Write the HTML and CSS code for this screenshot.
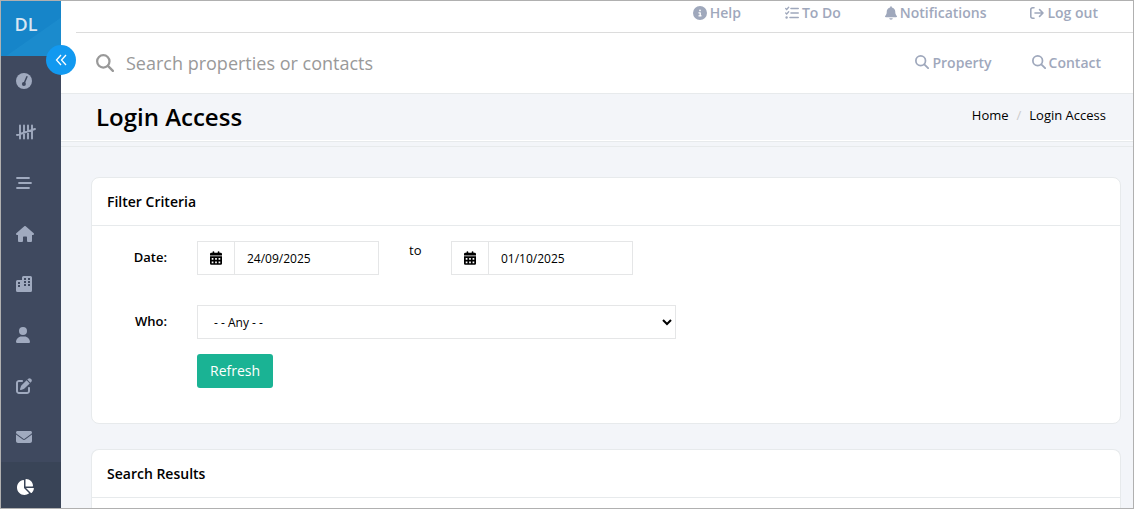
FILE: index.html
```html
<!DOCTYPE html>
<html lang="en">
<head>
    <meta charset="UTF-8">
    <meta name="viewport" content="width=device-width, initial-scale=1.0">
    <title>Login Access</title>
    <link rel="stylesheet" href="styles.css">
</head>
<body>
    <svg class="sprite" aria-hidden="true">
        <symbol id="search" viewBox="0 0 16 16">
            <circle cx="6.5" cy="6.5" r="5.5" fill="none" stroke="currentColor" stroke-width="2"/>
            <path d="M10.6 10.6L15 15" stroke="currentColor" stroke-width="2.1" stroke-linecap="round"/>
        </symbol>
        <symbol id="calendar" viewBox="0 0 14 16">
            <path fill="currentColor" fill-rule="evenodd" d="M3 1a1 1 0 0 1 2 0v1h4V1a1 1 0 0 1 2 0v1h1.500a1.500 1.500 0 0 1 1.500 1.500V5H0V3.500A1.500 1.500 0 0 1 1.500 2H3zM0 6h14v8.500a1.500 1.500 0 0 1-1.500 1.500h-11A1.500 1.500 0 0 1 0 14.500zM2 8v2h2V8zm4 0v2h2V8zm4 0v2h2V8zM2 12v2h2v-2zm4 0v2h2v-2zm4 0v2h2v-2z"/>
        </symbol>
    </svg>

    <aside class="sidebar">
        <div class="logo">DL</div>
        <button class="toggle" type="button" aria-label="Collapse menu">
            <svg width="12" height="12" viewBox="0 0 12 12" fill="none" stroke="currentColor" stroke-width="1.300"><path d="M6 1L1.500 6L6 11M11 1L6.500 6L11 11"/></svg>
        </button>
        <nav class="menu">
            <a href="#" aria-label="Dashboard">
                <svg width="16" height="16" viewBox="0 0 16 16"><circle cx="8" cy="8" r="8" fill="currentColor"/><path d="M10.900 3.800L8.300 10" stroke="#3f495f" stroke-width="1.500" stroke-linecap="round"/><circle cx="7.900" cy="11" r="2" fill="#3f495f"/></svg>
            </a>
            <a href="#" aria-label="Tally">
                <svg width="20" height="16" viewBox="0 0 20 16" fill="none" stroke="currentColor" stroke-width="1.900" stroke-linecap="round"><path d="M4 1.500V14.500M8 1.500V14.500M12 1.500V14.500M16 1.500V14.500M1 11L19 5"/></svg>
            </a>
            <a href="#" aria-label="Lists">
                <svg width="16" height="14" viewBox="0 0 16 14" fill="none" stroke="currentColor" stroke-width="1.800" stroke-linecap="round"><path d="M1 2H13M3 7H15M1 12H13"/></svg>
            </a>
            <a href="#" aria-label="Home">
                <svg width="18" height="16" viewBox="0 0 18 16" fill="currentColor"><path d="M8.300.300a1 1 0 0 1 1.400 0l8 7c.700.700.200 1.700-.700 1.700h-1v5.700c0 .800-.500 1.300-1.300 1.300H12.300c-.800 0-1.300-.500-1.300-1.300V11.500c0-.600-.400-1-1-1H8c-.600 0-1 .400-1 1v3.200C7 15.500 6.500 16 5.700 16H3.300C2.500 16 2 15.500 2 14.700V9H1C.100 9-.400 8 .300 7.300z"/></svg>
            </a>
            <a href="#" aria-label="Buildings">
                <svg width="16" height="16" viewBox="0 0 16 16" fill="currentColor" fill-rule="evenodd"><path d="M6 1.500A1.500 1.500 0 0 1 7.500 0h7A1.500 1.500 0 0 1 16 1.500v13a1.500 1.500 0 0 1-1.500 1.500h-13A1.500 1.500 0 0 1 0 14.500v-9A1.500 1.500 0 0 1 1.500 4H6zM8 2v2h2V2zm4 0v2h2V2zM8 5v2h2V5zm4 0v2h2V5zM8 8v2h2V8zm4 0v2h2V8zM2 6v2h2V6zm0 3v2h2V9z"/></svg>
            </a>
            <a href="#" aria-label="Contacts">
                <svg width="14" height="16" viewBox="0 0 448 512" fill="currentColor"><path d="M224 256A128 128 0 1 0 224 0a128 128 0 1 0 0 256zm-45.700 48C79.800 304 0 383.800 0 482.300C0 498.700 13.300 512 29.700 512H418.300c16.400 0 29.700-13.300 29.700-29.700C448 383.800 368.200 304 269.700 304H178.300z"/></svg>
            </a>
            <a href="#" aria-label="Edit">
                <svg width="16" height="16" viewBox="0 0 512 512" fill="currentColor"><path d="M471.600 21.700c-21.900-21.900-57.300-21.900-79.200 0L362.300 51.700l97.900 97.900 30.100-30.100c21.900-21.900 21.900-57.300 0-79.200L471.600 21.700zm-299.200 220c-6.100 6.100-10.800 13.600-13.500 21.900l-29.600 88.800c-2.900 8.600-.600 18.100 5.800 24.600s15.900 8.700 24.600 5.800l88.800-29.600c8.200-2.700 15.700-7.400 21.900-13.500L437.700 172.300 339.700 74.300 172.400 241.700zM96 64C43 64 0 107 0 160V416c0 53 43 96 96 96H352c53 0 96-43 96-96V320c0-17.700-14.300-32-32-32s-32 14.300-32 32v96c0 17.700-14.300 32-32 32H96c-17.700 0-32-14.300-32-32V160c0-17.700 14.300-32 32-32h96c17.700 0 32-14.300 32-32s-14.300-32-32-32H96z"/></svg>
            </a>
            <a href="#" aria-label="Mail">
                <svg width="16" height="16" viewBox="0 0 512 512" fill="currentColor"><path d="M48 64C21.500 64 0 85.500 0 112c0 15.100 7.100 29.300 19.200 38.400L236.800 313.600c11.400 8.500 27 8.500 38.400 0L492.800 150.400c12.100-9.100 19.200-23.300 19.200-38.400c0-26.500-21.500-48-48-48H48zM0 176V384c0 35.300 28.700 64 64 64H448c35.300 0 64-28.700 64-64V176L294.400 339.200c-22.800 17.100-54 17.100-76.800 0L0 176z"/></svg>
            </a>
            <a href="#" class="active" aria-label="Reports">
                <svg width="18" height="16" viewBox="0 0 576 512" fill="currentColor"><path d="M304 240V16.600c0-9 7-16.600 16-16.600C443.700 0 544 100.300 544 224c0 9-7.600 16-16.600 16H304zM32 272C32 150.700 122.100 50.300 239 34.300c9.200-1.300 17 6.100 17 15.400V288L412.500 444.500c6.700 6.700 6.200 17.700-1.500 23.100C371.800 495.600 323.800 512 272 512C139.500 512 32 404.600 32 272zm526.400 16c9.300 0 16.600 7.800 15.400 17c-7.700 55.900-34.600 105.600-73.900 142.300c-6 5.600-15.400 5.200-21.200-.700L320 288H558.400z"/></svg>
            </a>
        </nav>
    </aside>

    <main class="page">
        <nav class="top-links">
            <a href="#"><svg width="14" height="14" viewBox="0 0 512 512" fill="currentColor"><path d="M256 512A256 256 0 1 0 256 0a256 256 0 1 0 0 512zM216 336h24V272H216c-13.300 0-24-10.700-24-24s10.700-24 24-24h48c13.300 0 24 10.700 24 24v88h8c13.300 0 24 10.700 24 24s-10.700 24-24 24H216c-13.300 0-24-10.700-24-24s10.700-24 24-24zm40-208a32 32 0 1 1 0 64 32 32 0 1 1 0-64z"/></svg>Help</a>
            <a href="#"><svg width="14" height="14" viewBox="0 0 14 14" fill="none" stroke="currentColor" stroke-width="1.600" stroke-linecap="round"><path d="M6 2.500H13.200M6 7H13.200M5 11.500H13.200"/><path stroke-width="1.300" d="M.700 2.500L1.700 3.500L3.700 1.200M.700 7L1.700 8L3.700 5.700"/><circle cx="1.600" cy="11.500" r="1.200" fill="currentColor" stroke="none"/></svg>To Do</a>
            <a href="#"><svg width="12" height="14" viewBox="0 0 448 512" fill="currentColor"><path d="M224 0c-17.700 0-32 14.300-32 32V51.200C119 66 64 130.600 64 208v18.800c0 47-17.300 92.400-48.500 127.600l-7.400 8.300c-8.400 9.400-10.400 22.900-5.300 34.400S19.400 416 32 416H416c12.600 0 24-7.400 29.200-18.900s3.100-25-5.300-34.400l-7.400-8.300C401.300 319.200 384 273.900 384 226.800V208c0-77.400-55-142-128-156.800V32c0-17.700-14.300-32-32-32zm45.300 493.300c12-12 18.700-28.300 18.700-45.300H160c0 17 6.700 33.300 18.700 45.300s28.300 18.700 45.300 18.700s33.300-6.700 45.300-18.700z"/></svg>Notifications</a>
            <a href="#"><svg width="14" height="14" viewBox="0 0 14 14" fill="none" stroke="currentColor" stroke-width="1.600" stroke-linecap="round" stroke-linejoin="round"><path d="M4 1.800H2.600A1.800 1.800 0 0 0 .800 3.600V10.400A1.800 1.800 0 0 0 2.600 12.200H4M5 7H13M9.600 3.600L13 7L9.600 10.400"/></svg>Log out</a>
        </nav>

        <div class="search-bar">
            <label class="search">
                <svg width="18" height="18"><use href="#search"/></svg>
                <input type="text" placeholder="Search properties or contacts" aria-label="Search properties or contacts">
            </label>
            <div class="search-links">
                <a href="#"><svg width="14" height="14"><use href="#search"/></svg>Property</a>
                <a href="#"><svg width="14" height="14"><use href="#search"/></svg>Contact</a>
            </div>
        </div>

        <header class="heading">
            <h1>Login Access</h1>
            <ol class="breadcrumb">
                <li><a href="#">Home</a></li>
                <li>Login Access</li>
            </ol>
        </header>

        <div class="content">
            <section class="card">
                <h2>Filter Criteria</h2>
                <form class="filter">
                    <label for="dateFrom">Date:</label>
                    <div class="dates">
                        <div class="date-box">
                            <span class="addon"><svg width="12" height="14"><use href="#calendar"/></svg></span>
                            <input type="text" id="dateFrom" value="24/09/2025">
                        </div>
                        <label class="to" for="dateTo">to</label>
                        <div class="date-box">
                            <span class="addon"><svg width="12" height="14"><use href="#calendar"/></svg></span>
                            <input type="text" id="dateTo" value="01/10/2025">
                        </div>
                    </div>
                    <label for="who">Who:</label>
                    <div class="who">
                        <select id="who">
                            <option>- - Any - -</option>
                        </select>
                        <button class="refresh" type="submit">Refresh</button>
                    </div>
                </form>
            </section>

            <section class="card results">
                <h2>Search Results</h2>
            </section>
        </div>
    </main>
</body>
</html>
```
FILE: styles.css
```css
* {
    box-sizing: border-box;
}
body {
    margin: 0;
    height: 100vh;
    display: flex;
    overflow: hidden;
    border: 1px solid #b0b0b0;
    background-color: #f3f5f9;
    font-family: "Open Sans", sans-serif;
    font-size: 13px;
    color: #000;
}
a {
    color: inherit;
    text-decoration: none;
}
input, select, button {
    font-family: inherit;
    color: inherit;
}
.sprite {
    position: absolute;
    width: 0;
    height: 0;
}

/* sidebar */
.sidebar {
    position: relative;
    flex: none;
    display: flex;
    flex-direction: column;
    width: 60px;
    background-color: #3f495f;
}
.logo {
    flex: none;
    height: 55px;
    padding-right: 10px;
    background: linear-gradient(145deg, #1685c9 60%, #1b8bcd 61%);
    color: #d9e6f2;
    font-size: 18px;
    font-weight: 600;
    line-height: 47px;
    text-align: center;
}
.toggle {
    position: absolute;
    top: 44px;
    left: 45px;
    width: 30px;
    height: 30px;
    display: flex;
    align-items: center;
    justify-content: center;
    padding: 0;
    border: none;
    border-radius: 50%;
    background-color: #1299f0;
    color: #fff;
    cursor: pointer;
}
.menu {
    display: flex;
    flex: 1;
    flex-direction: column;
    min-height: 0;
}
.menu a {
    display: flex;
    flex: 51 1 0;
    align-items: center;
    padding-left: 15px;
    color: #a0aabf;
}
.menu a.active {
    flex-grow: 42;
    padding-top: 4px;
    background-color: #394457;
    color: #fff;
}

/* top bars */
.page {
    flex: 1;
    min-width: 0;
    display: flex;
    flex-direction: column;
}
.top-links, .search-links {
    display: flex;
    gap: 44px;
    color: #9fa8bc;
    font-size: 14px;
    font-weight: 600;
}
.top-links a, .search-links a {
    display: flex;
    align-items: center;
    gap: 3px;
}
.top-links {
    flex: none;
    justify-content: flex-end;
    height: 32px;
    margin-left: 15px;
    padding: 0 35px 8px 0;
    border-bottom: 1px solid #dcdcdc;
    background-color: #fff;
    box-shadow: -15px 0 #fff;
}
.search-bar {
    flex: none;
    display: flex;
    align-items: center;
    justify-content: space-between;
    height: 61px;
    padding: 0 32px 0 35px;
    border-bottom: 1px solid #e7eaec;
    background-color: #fff;
}
.search-links {
    gap: 40px;
    padding-bottom: 2px;
}
.search {
    display: flex;
    flex: 1;
    align-items: center;
    gap: 12px;
    color: #999;
}
.search input {
    flex: 1;
    padding: 0;
    border: none;
    outline: none;
    background: none;
    font-size: 18px;
}
.search input::placeholder {
    color: #999;
}
.heading {
    flex: none;
    display: flex;
    align-items: center;
    justify-content: space-between;
    height: 53px;
    padding: 0 27px 8px 35px;
    border-bottom: 1px solid #e7eaec;
    background: linear-gradient(#fff, #fff) 0 46px / 100% 1px no-repeat,
                linear-gradient(#e7eaec, #e7eaec) 0 47px / 100% 1px no-repeat;
}
.heading h1 {
    margin: 0;
    font-size: 24px;
    font-weight: 600;
}
.breadcrumb {
    display: flex;
    margin: 0;
    padding: 0 0 2px;
    list-style: none;
}
.breadcrumb li + li::before {
    content: "/";
    padding: 0 8px;
    color: #ccc;
}

/* cards */
.content {
    display: flex;
    flex: 1;
    flex-direction: column;
    gap: 25px;
    min-height: 0;
    padding: 30px 12px 0 30px;
}
.card {
    flex: none;
    border: 1px solid #e7eaec;
    border-radius: 8px;
    background-color: #fff;
}
.card.results {
    flex: 1;
    border-bottom: none;
    border-radius: 8px 8px 0 0;
}
.card h2 {
    margin: 0;
    padding: 0 15px;
    border-bottom: 1px solid #e7eaec;
    font-size: 14px;
    font-weight: 600;
    line-height: 47px;
}
.filter {
    display: grid;
    grid-template-columns: 60px 1fr;
    gap: 30px;
    padding: 15px 15px 35px;
}
.filter label {
    font-weight: 600;
    line-height: 32px;
    text-align: right;
}
.dates {
    display: flex;
    gap: 30px;
}
.filter .to {
    width: 12px;
    font-weight: 400;
    line-height: 18px;
}
.date-box {
    display: flex;
    width: 182px;
    height: 34px;
    border: 1px solid #e5e6e7;
}
.addon {
    display: flex;
    align-items: center;
    justify-content: center;
    width: 37px;
    border-right: 1px solid #e5e6e7;
}
.date-box input {
    flex: 1;
    min-width: 0;
    padding: 0 12px;
    border: none;
    font-size: 12px;
}
.who {
    display: flex;
    flex-direction: column;
    align-items: flex-start;
    gap: 15px;
}
.who select {
    width: 100%;
    max-width: 479px;
    height: 34px;
    padding-left: 12px;
    border: 1px solid #e5e6e7;
    border-radius: 0;
    background-color: #fff;
    font-size: 12px;
}
.refresh {
    height: 34px;
    padding: 0 13px 2px;
    border: none;
    border-radius: 3px;
    background-color: #1ab394;
    color: #fff;
    font-size: 14px;
    cursor: pointer;
}
```
